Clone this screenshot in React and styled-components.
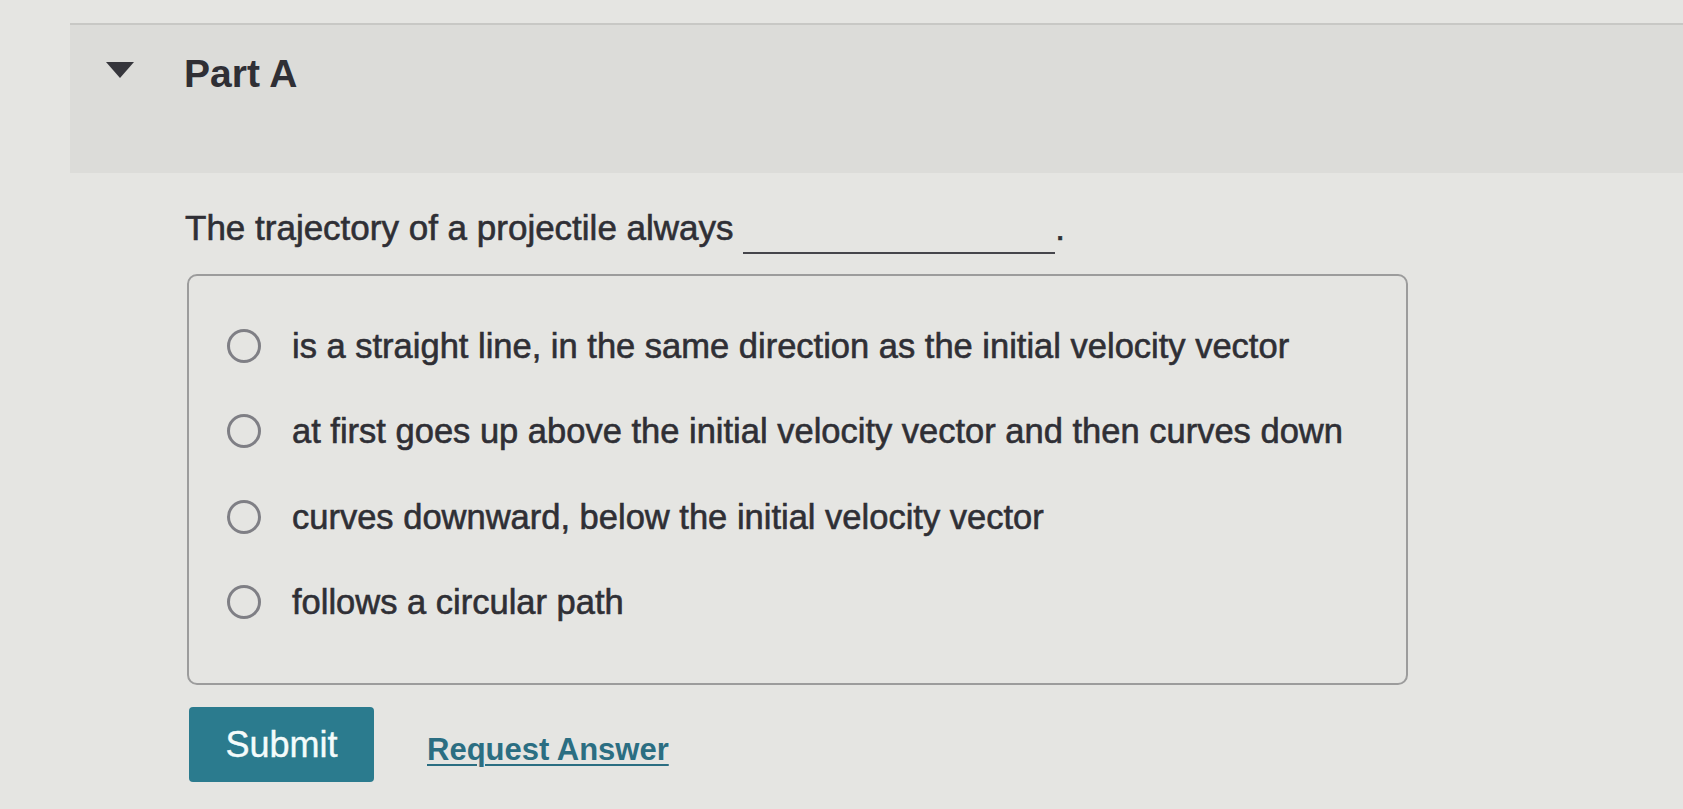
import React from "react";
import styled, { createGlobalStyle } from "styled-components";

const options = [
  "is a straight line, in the same direction as the initial velocity vector",
  "at first goes up above the initial velocity vector and then curves down",
  "curves downward, below the initial velocity vector",
  "follows a circular path",
];

export default function App() {
  return (
    <>
      <GlobalStyle />
      <Page>
        <Header>
          <Caret />
          <PartTitle>Part A</PartTitle>
        </Header>
        <Content>
          <Question>
            The trajectory of a projectile always <Blank />.
          </Question>
          <ChoiceBox>
            {options.map((text) => (
              <Choice key={text}>
                <Radio />
                <ChoiceText>{text}</ChoiceText>
              </Choice>
            ))}
          </ChoiceBox>
          <Actions>
            <SubmitButton>Submit</SubmitButton>
            <RequestLink href="#">Request Answer</RequestLink>
          </Actions>
        </Content>
      </Page>
    </>
  );
}

const GlobalStyle = createGlobalStyle`
  html, body {
    margin: 0;
    padding: 0;
    background: #e5e5e2;
  }
  body {
    font-family: "Liberation Sans", Arial, sans-serif;
    color: #2f2f35;
  }
`;

const Page = styled.div`
  width: 1683px;
  height: 809px;
  overflow: hidden;
`;

const Header = styled.div`
  margin: 23px 0 0 70px;
  height: 150px;
  border-top: 2px solid #c8c8c5;
  background: #dcdcd9;
  display: flex;
  align-items: flex-start;
  padding: 34px 0 0 36px;
  box-sizing: border-box;
`;

const Caret = styled.span`
  width: 0;
  height: 0;
  margin-top: 3px;
  border-left: 14px solid transparent;
  border-right: 14px solid transparent;
  border-top: 16px solid #36363c;
`;

const PartTitle = styled.h2`
  margin: -5px 0 0 50px;
  font-size: 39px;
  line-height: 1;
  font-weight: 700;
  color: #2f2f35;
`;

const Content = styled.div`
  padding-left: 185px;
`;

const Question = styled.p`
  margin: 37px 0 0;
  font-size: 35px;
  line-height: 1;
  -webkit-text-stroke: 0.6px #2f2f35;
`;

const Blank = styled.span`
  display: inline-block;
  width: 312px;
  height: 14px;
  margin-bottom: -14px;
  border-bottom: 2px solid #45454b;
`;

const ChoiceBox = styled.div`
  margin-top: 29px;
  margin-left: 2px;
  width: 1221px;
  height: 411px;
  box-sizing: border-box;
  border: 2px solid #9c9c9c;
  border-radius: 10px;
  padding: 27px 0 0 38px;
`;

const Choice = styled.label`
  display: flex;
  align-items: center;
  height: 85.5px;
`;

const Radio = styled.span`
  flex: none;
  width: 28px;
  height: 28px;
  border: 3px solid #7f7f85;
  border-radius: 50%;
`;

const ChoiceText = styled.span`
  margin-left: 31px;
  font-size: 34.5px;
  line-height: 1;
  -webkit-text-stroke: 0.6px #2f2f35;
`;

const Actions = styled.div`
  display: flex;
  align-items: center;
  margin-top: 22px;
  margin-left: 4px;
`;

const SubmitButton = styled.button`
  width: 185px;
  height: 75px;
  border: none;
  border-radius: 4px;
  background: #2b7b8e;
  color: #f4fbfb;
  font-family: "Liberation Sans", Arial, sans-serif;
  font-size: 36px;
  padding: 0;
  -webkit-text-stroke: 0.4px #f4fbfb;
`;

const RequestLink = styled.a`
  margin: 10px 0 0 53px;
  font-size: 31px;
  font-weight: 700;
  color: #2b6e82;
  text-decoration: underline;
  text-decoration-thickness: 2px;
  text-underline-offset: 4px;
`;
